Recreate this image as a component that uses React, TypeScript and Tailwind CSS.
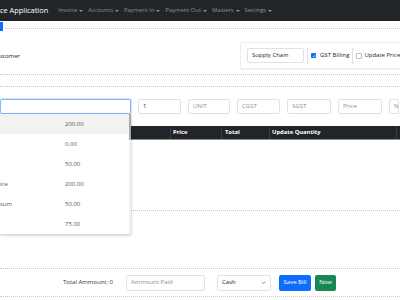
const navItems = ["Invoice", "Accounts", "Payment In", "Payment Out", "Masters", "Settings"];

const suggestions = [
  { name: "", price: "200.00" },
  { name: "", price: "0.00" },
  { name: "", price: "50.00" },
  { name: "ice", price: "200.00" },
  { name: "sum", price: "50.00" },
  { name: "", price: "75.00" },
];

function Caret() {
  return (
    <span className="ml-[2px] inline-block h-0 w-0 border-x-[2px] border-t-[2px] border-x-transparent border-t-current align-middle" />
  );
}

function Field({ placeholder, value, w = "w-[43px]" }: { placeholder?: string; value?: string; w?: string }) {
  return (
    <div className={`${w} flex h-[15px] shrink-0 items-center overflow-hidden whitespace-nowrap rounded-[2px] border border-[#dee2e6] px-[4px] text-[6px]`}>
      {value ? <span className="text-[#212529]">{value}</span> : <span className="text-[#8a9096]">{placeholder}</span>}
    </div>
  );
}

export default function App() {
  return (
    <div className="relative h-[300px] w-[400px] overflow-hidden bg-white font-['Open_Sans',sans-serif] text-[#212529]">
      {/* navbar */}
      <div className="flex h-[21px] items-center bg-[#212529]">
        <span className="text-[7.4px] text-white">ce Application</span>
        <div className="ml-[10px] flex gap-[5px] text-[5.8px] text-[#8f9295]">
          {navItems.map((n) => (
            <span key={n} className="flex items-center">
              {n}
              <Caret />
            </span>
          ))}
        </div>
      </div>

      {/* tab strip */}
      <div className="flex items-start">
        <div className="mt-[1px] h-[9px] w-[3px] bg-[#0d6efd]" />
        <div className="ml-[2px] h-[8px] flex-1 border-b border-dotted border-[#c8c8c8]" />
      </div>

      {/* customer row */}
      <div className="mt-[7px] flex h-[37px] items-center justify-between border-b border-dotted border-[#c8c8c8] pb-[1px]">
        <span className="mt-[2px] text-[6px]">stomer</span>
        <div className="mr-[-12px] flex h-[27px] w-[172px] shrink-0 items-center rounded-[2px] border border-[#eeeeee] pl-[6px] shadow-[0_1px_2px_rgba(0,0,0,0.06)]">
          <Field value="Supply Chain" w="w-[57px]" />
          <div className="ml-[3px] mr-[3px] h-[16px] w-px shrink-0 bg-[#dee2e6]" />
          <span className="flex h-[5px] w-[5px] shrink-0 items-center justify-center rounded-[1px] bg-[#0d6efd]">
            <svg viewBox="0 0 10 10" className="h-[4px] w-[4px]">
              <path d="M2 5.2 L4.2 7.4 L8 2.8" fill="none" stroke="white" strokeWidth="1.6" />
            </svg>
          </span>
          <span className="ml-[4px] shrink-0 whitespace-nowrap text-[6px]">GST Billing</span>
          <div className="mx-[3px] h-[16px] w-px shrink-0 bg-[#dee2e6]" />
          <span className="h-[6px] w-[6px] shrink-0 rounded-[1px] border border-[#b9bec4]" />
          <span className="ml-[2px] shrink-0 whitespace-nowrap text-[6px]">Update Price</span>
        </div>
      </div>

      <div className="mt-[11px] border-b border-dotted border-[#c8c8c8]" />

      {/* item entry row */}
      <div className="mt-[12px] flex gap-[7px]">
        <div className="h-[15px] w-[131px] shrink-0 rounded-[2px] border border-[#86b7fe] shadow-[0_0_0_1px_rgba(13,110,253,0.2)]" />
        <Field value="1" />
        <Field placeholder="UNIT" w="w-[42px]" />
        <Field placeholder="CGST" />
        <Field placeholder="SGST" w="w-[44px]" />
        <Field placeholder="Price" w="w-[44px]" />
        <Field placeholder="N" w="w-[10px]" />
      </div>

      {/* table header */}
      <div className="mt-[12px] flex h-[13px] items-center bg-[#212529] text-[5.8px] font-bold text-white">
        <div className="h-full w-[171px] border-r border-[#373b3e]" />
        <div className="flex h-full w-[51px] items-center border-r border-[#373b3e] pl-[2px]">Price</div>
        <div className="flex h-full w-[48px] items-center border-r border-[#373b3e] pl-[3px]">Total</div>
        <div className="flex h-full w-[127px] items-center border-r border-[#373b3e] pl-[2px]">Update Quantity</div>
      </div>
      <div className="h-px bg-[#8a8d90]" />

      <div className="h-[71px] border-b border-dotted border-[#c8c8c8]" />
      <div className="h-[58px] border-b border-dotted border-[#c8c8c8]" />

      {/* footer */}
      <div className="flex h-[27px] items-center pl-[63px] text-[6px]">
        <span className="text-[#333]">Total Ammount: 0</span>
        <div className="ml-[13px] flex h-[16px] w-[79px] items-center rounded-[2px] border border-[#dee2e6] px-[4px] text-[#8a9096]">
          Ammount Paid
        </div>
        <div className="ml-[12px] flex h-[16px] w-[54px] items-center justify-between rounded-[2px] border border-[#dee2e6] px-[4px]">
          <span>Cash</span>
          <svg viewBox="0 0 10 10" className="h-[5px] w-[5px]">
            <path d="M1.5 3.5 L5 7 L8.5 3.5" fill="none" stroke="#495057" strokeWidth="1.3" />
          </svg>
        </div>
        <div className="ml-[8px] flex h-[16px] w-[32px] items-center justify-center rounded-[2px] bg-[#0d6efd] text-white">
          Save Bill
        </div>
        <div className="ml-[4px] flex h-[16px] w-[21px] items-center justify-center rounded-[2px] bg-[#198754] text-white">
          Now
        </div>
      </div>
      <div className="border-b border-dotted border-[#c8c8c8]" />

      {/* autocomplete dropdown */}
      <div className="absolute left-0 top-[114px] flex w-[131px] bg-white shadow-[0_1px_3px_rgba(0,0,0,0.25)]">
        <div className="flex-1">
          {suggestions.map((s, i) => (
            <div
              key={i}
              className={`flex h-[20px] items-center text-[6px] text-[#555] ${i === 0 ? "bg-[#f2f2f2]" : ""}`}
            >
              <span className="w-[65px]">{s.name}</span>
              <span>{s.price}</span>
            </div>
          ))}
        </div>
        <div className="w-[2px] bg-[#f0f0f0]">
          <div className="h-[26px] bg-[#a8a8a8]" />
        </div>
      </div>
    </div>
  );
}
